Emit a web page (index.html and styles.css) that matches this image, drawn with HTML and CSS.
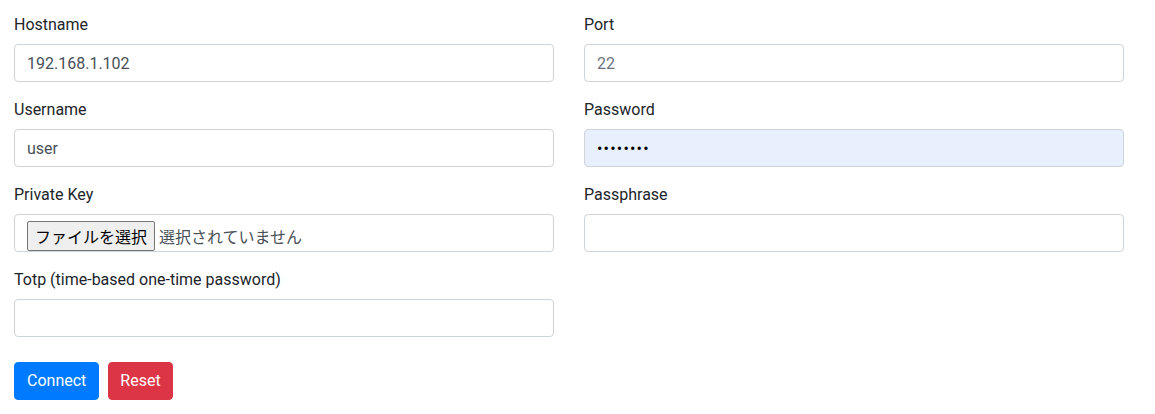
FILE: index.html
```html
<!DOCTYPE html>
<html lang="ja">
<head>
<meta charset="utf-8">
<title>SSH Connect</title>
<link rel="stylesheet" href="styles.css">
</head>
<body>
<form class="form">
  <div class="row">
    <div class="group">
      <label class="label">Hostname</label>
      <input class="control" type="text" value="192.168.1.102">
    </div>
    <div class="group">
      <label class="label">Port</label>
      <input class="control" type="text" placeholder="22">
    </div>
  </div>
  <div class="row">
    <div class="group">
      <label class="label">Username</label>
      <input class="control" type="text" value="user">
    </div>
    <div class="group">
      <label class="label">Password</label>
      <input class="control autofill" type="password" value="12345678">
    </div>
  </div>
  <div class="row">
    <div class="group">
      <label class="label">Private Key</label>
      <div class="control file">
        <span class="file-btn">ファイルを選択</span>
        <span class="file-name">選択されていません</span>
      </div>
    </div>
    <div class="group">
      <label class="label">Passphrase</label>
      <input class="control" type="password">
    </div>
  </div>
  <div class="row">
    <div class="group">
      <label class="label">Totp (time-based one-time password)</label>
      <input class="control" type="text">
    </div>
  </div>
  <div class="actions">
    <button type="button" class="btn btn-primary">Connect</button>
    <button type="button" class="btn btn-danger">Reset</button>
  </div>
</form>
</body>
</html>
```
FILE: styles.css
```css
* { box-sizing: border-box; }
body {
  margin: 0;
  background: #fff;
  color: #212529;
  font-family: Roboto, "Noto Sans CJK JP", sans-serif;
  font-size: 16px;
}
.form {
  width: 1110px;
  margin-left: 14px;
  padding-top: 13px;
}
.row {
  display: grid;
  grid-template-columns: 1fr 1fr;
  column-gap: 30px;
}
.group {
  display: flex;
  flex-direction: column;
  margin-bottom: 16px;
}
.label {
  display: block;
  line-height: 23px;
  margin-bottom: 8px;
  color: #212529;
}
.control {
  display: block;
  width: 100%;
  height: 38px;
  padding: 6px 12px;
  font-family: Roboto, "Noto Sans CJK JP", sans-serif;
  font-size: 16px;
  line-height: 24px;
  color: #495057;
  background: #fff;
  border: 1px solid #ced4da;
  border-radius: 4px;
  outline: none;
}
.control::placeholder { color: #6c757d; opacity: 1; }
.autofill {
  background: #e8f0fe;
  color: #000;
  letter-spacing: 1.2px;
}
.file {
  display: flex;
  align-items: flex-start;
}
.file-btn {
  flex: none;
  font-family: "Noto Sans CJK JP", sans-serif;
  font-size: 16px;
  line-height: 28px;
  height: 30px;
  color: #000;
  background: #efefef;
  border: 1px solid #767676;
  border-radius: 2px;
  padding: 0 7px;
}
.file-name {
  font-family: "Noto Sans CJK JP", sans-serif;
  line-height: 30px;
  margin-left: 4px;
  color: #495057;
}
.actions {
  display: flex;
  gap: 9px;
  margin-top: 9px;
}
.btn {
  font-family: Roboto, sans-serif;
  font-size: 16px;
  line-height: 24px;
  padding: 6px 12px;
  border: 1px solid transparent;
  border-radius: 4px;
  color: #fff;
  cursor: pointer;
}
.btn-primary { background: #007bff; border-color: #007bff; }
.btn-danger { background: #dc3545; border-color: #dc3545; padding: 6px 11px; }
```
